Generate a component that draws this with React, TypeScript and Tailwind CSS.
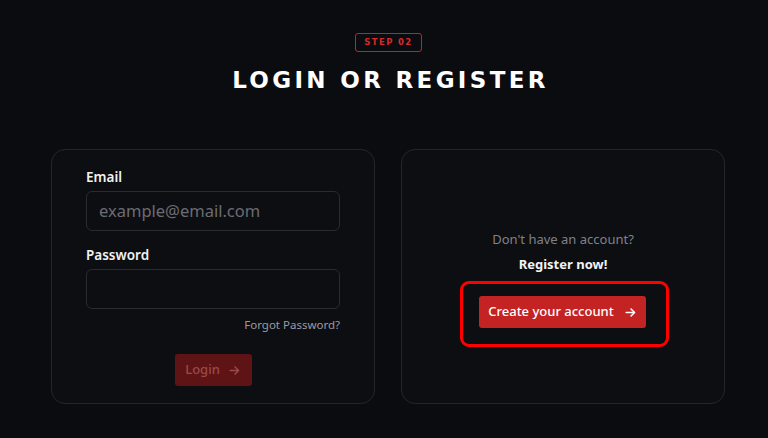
import React from "react";

const Arrow = ({ className }: { className?: string }) => (
  <svg viewBox="0 0 24 24" className={className} fill="none" stroke="currentColor" strokeWidth={2.8} strokeLinecap="round" strokeLinejoin="round">
    <path d="M4 12h15" />
    <path d="M13 5.5l6.5 6.5-6.5 6.5" />
  </svg>
);

export default function App() {
  return (
    <div className="w-[768px] h-[438px] bg-[#0b0c10] overflow-hidden flex flex-col items-center" style={{ fontFamily: '"Noto Sans", "Open Sans", sans-serif' }}>
      <div className="mt-[33px] ml-[9px] h-[19px] px-[8px] border border-[#c42222] rounded-[3px] flex items-center text-[#d42a2a] text-[8.5px] font-bold tracking-[0.16em] leading-none" style={{ fontFamily: '"DejaVu Sans", sans-serif' }}>
        STEP 02
      </div>
      <h1 className="mt-[14px] ml-[13px] text-white text-[23px] font-bold leading-[28px] tracking-[0.145em]" style={{ fontFamily: '"DejaVu Sans", sans-serif' }}>
        LOGIN OR REGISTER
      </h1>
      <div className="mt-[55px] ml-[8px] flex gap-[26px]">
        <div className="w-[324px] h-[255px] rounded-[14px] border border-[#25262c] bg-[#0d0e12] px-[34px] pt-[18px] flex flex-col">
          <label className="text-[13.5px] font-semibold text-[#f1f1f1] leading-[18px]">Email</label>
          <div className="mt-[5px] h-[40px] rounded-[6px] border border-[#2a2b31] flex items-center px-[12px] text-[16.5px] text-[#6b6c72]">
            example@email.com
          </div>
          <label className="mt-[15px] text-[13.5px] font-semibold text-[#f1f1f1] leading-[18px]">Password</label>
          <div className="mt-[5px] h-[40px] rounded-[6px] border border-[#2a2b31]" />
          <div className="mt-[8px] text-right text-[11.5px] text-[#9a9ba1] leading-[16px]">Forgot Password?</div>
          <div className="mt-[21px] flex justify-center">
            <div className="h-[32px] w-[77px] rounded-[3px] bg-[#5e1414] flex items-center justify-center gap-[8px] text-[#9b4a4a] text-[13px] font-medium">
              Login
              <Arrow className="w-[13px] h-[13px]" />
            </div>
          </div>
        </div>
        <div className="w-[324px] h-[255px] rounded-[14px] border border-[#25262c] bg-[#0d0e12] flex flex-col items-center pt-[79px]">
          <div className="text-[13px] text-[#808188] leading-[20px]">Don't have an account?</div>
          <div className="mt-[6px] text-[13px] font-bold text-[#f3f3f3] leading-[18px]">Register now!</div>
          <div className="mt-[8px] ml-[3px] w-[209px] h-[66px] rounded-[9px] border-[3px] border-[#ff0000] pt-[12px] pl-[16px]">
            <div className="h-[32px] w-[167px] rounded-[3px] bg-[#c42323] flex items-center justify-center gap-[10px] text-white text-[13px] font-medium">
              Create your account
              <Arrow className="w-[13px] h-[13px]" />
            </div>
          </div>
        </div>
      </div>
    </div>
  );
}
